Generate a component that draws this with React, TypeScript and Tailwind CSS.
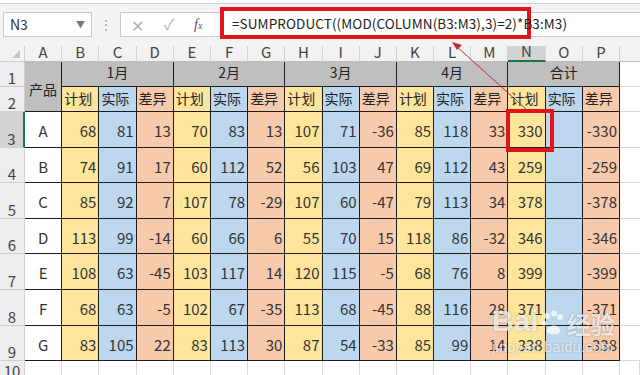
import React from "react";

const cols = "ABCDEFGHIJKLMNOP".split("");
const months = ["1月", "2月", "3月", "4月", "合计"];
const labels = ["计划", "实际", "差异"];
const fills = ["bg-[#fde59c]", "bg-[#bdd7ee]", "bg-[#f7caab]"];

const rows: [string, (number | null)[]][] = [
  ["A", [68, 81, 13, 70, 83, 13, 107, 71, -36, 85, 118, 33, 330, null, -330]],
  ["B", [74, 91, 17, 60, 112, 52, 56, 103, 47, 69, 112, 43, 259, null, -259]],
  ["C", [85, 92, 7, 107, 78, -29, 107, 60, -47, 79, 113, 34, 378, null, -378]],
  ["D", [113, 99, -14, 60, 66, 6, 55, 70, 15, 118, 86, -32, 346, null, -346]],
  ["E", [108, 63, -45, 103, 117, 14, 120, 115, -5, 68, 76, 8, 399, null, -399]],
  ["F", [68, 63, -5, 102, 67, -35, 113, 68, -45, 88, 116, 28, 371, null, -371]],
  ["G", [83, 105, 22, 83, 113, 30, 87, 54, -33, 85, 99, 14, 338, null, -338]],
];

const line = "border-r border-b border-[#1c1c1c]";

function RowHead({ n, active }: { n: number; active?: boolean }) {
  return (
    <div
      className={`flex items-end justify-center pb-[1px] text-[15px] leading-none text-[#444] border-b border-r border-[#cfcfcf] ${
        active ? "bg-[#d3d3d3] border-r-[#217346] border-r-2" : "bg-[#ededed]"
      }`}
    >
      {n}
    </div>
  );
}

export default function App() {
  return (
    <div className="relative w-[640px] h-[375px] overflow-hidden bg-white font-['Noto_Sans_CJK_SC',sans-serif] text-[#222]">
      {/* formula bar */}
      <div className="h-[43px] bg-[#f3f3f3] border-t border-[#d2d2d2] mt-[3px] flex items-start pt-[8px] relative">
        <div className="ml-[3px] w-[89px] h-[25px] bg-white border border-[#c9c9c9] flex items-center justify-between px-[6px]">
          <span className="text-[14px] text-[#333]">N3</span>
          <span className="text-[9px] text-[#777]">▼</span>
        </div>
        <div className="w-[28px] h-[25px] flex items-center justify-center text-[#a8a8a8] text-[14px]">⋮</div>
        <div className="flex-1 h-[25px] bg-white border border-[#c9c9c9] border-r-0 flex items-center pl-[10px]">
          <span className="text-[#b0b0b0] text-[16px] w-[33px]">✕</span>
          <span className="text-[#b0b0b0] text-[15px] w-[30px]">✓</span>
          <span className="text-[#555] text-[14px] italic font-['Liberation_Serif',serif]">f<span className="text-[10px]">x</span></span>
        </div>
      </div>

      {/* grid */}
      <div className="grid grid-cols-[25px_repeat(16,37.2px)_1fr] grid-rows-[19px_25px_25px_repeat(7,35.6px)_1fr] h-[329px] -mt-[3px]">
        {/* column header */}
        <div className="bg-[#f2f2f2] border-b border-r border-[#cfcfcf] flex items-end justify-end pr-[4px] pb-[3px]">
          <div className="w-0 h-0 border-l-[8px] border-l-transparent border-b-[8px] border-b-[#c4c4c4]" />
        </div>
        {cols.map((c) => (
          <div
            key={c}
            className={`flex items-center justify-center text-[15px] text-[#444] border-r border-[#d4d4d4] ${
              c === "N" ? "bg-[#d4d4d4] border-b-2 border-b-[#217346]" : "bg-[#f2f2f2] border-b border-b-[#bdbdbd]"
            }`}
          >
            {c}
          </div>
        ))}
        <div className="bg-[#f2f2f2] border-b border-[#bdbdbd]" />

        {/* row 1 */}
        <RowHead n={1} />
        <div className={`row-span-2 bg-[#bfbfbf] flex items-center justify-center pt-[6px] text-[14px] ${line}`}>产品</div>
        {months.map((m) => (
          <div key={m} className={`col-span-3 bg-[#bfbfbf] flex items-end justify-center pb-[3px] text-[14px] ${line}`}>
            {m}
          </div>
        ))}
        <div className="border-b border-[#dadada]" />

        {/* row 2 */}
        <RowHead n={2} />
        {Array.from({ length: 15 }).map((_, i) => (
          <div key={i} className={`${fills[i % 3]} flex items-end pl-[2px] pb-[2px] text-[14px] ${line}`}>
            {labels[i % 3]}
          </div>
        ))}
        <div className="border-b border-[#dadada]" />

        {/* data */}
        {rows.map(([name, vals], r) => (
          <React.Fragment key={name}>
            <RowHead n={r + 3} active={r === 0} />
            <div className={`bg-white flex items-center justify-center pt-[4px] text-[15px] text-[#333] ${line}`}>{name}</div>
            {vals.map((v, i) => (
              <div
                key={i}
                className={`${fills[i % 3]} flex items-center justify-end pr-[2px] pt-[4px] text-[15px] text-[#333] ${line}`}
              >
                {v === null ? "" : v}
              </div>
            ))}
            <div className="border-b border-[#dadada]" />
          </React.Fragment>
        ))}

        {/* row 10 */}
        <div className="bg-[#ededed] border-r border-[#cfcfcf] flex items-end justify-center text-[15px] leading-none text-[#444] pt-[2px]">10</div>
        {Array.from({ length: 17 }).map((_, i) => (
          <div key={i} className="border-r border-[#dadada]" />
        ))}
      </div>

      {/* annotations */}
      <div className="absolute left-[220px] top-[7px] w-[311px] h-[32px] border-[4px] border-[#e0141b] bg-white flex items-center pl-[8px] text-[13.5px] text-[#222] tracking-[0.1px]">
        =SUMPRODUCT((MOD(COLUMN(B3:M3),3)=2)*B3:M3)
      </div>
      <div className="absolute left-[506px] top-[109px] w-[48px] h-[43px] border-[4px] border-[#e0141b]" />
      <svg className="absolute left-0 top-0" width="640" height="375">
        <line x1="527" y1="110" x2="455" y2="45" stroke="#c8282a" strokeWidth="1" />
        <polygon points="452,42 462,45 457,50" fill="#c8282a" />
      </svg>

      {/* watermark */}
      <div className="absolute left-[492px] top-[306px] text-white/75 [text-shadow:0_0_2px_rgba(0,0,0,0.3)]">
        <div className="flex items-end gap-[2px]">
          <span className="text-[30px] font-bold leading-none font-['Liberation_Sans',sans-serif]">Bai</span>
          <svg width="24" height="26" viewBox="0 0 24 26" className="opacity-75">
            <circle cx="6" cy="6" r="3" fill="white" />
            <circle cx="13" cy="3.5" r="3" fill="white" />
            <circle cx="19" cy="7" r="3" fill="white" />
            <circle cx="3" cy="13" r="2.6" fill="white" />
            <path d="M6 22 C6 14 18 13 19 21 C19 25 7 25 6 22Z" fill="white" />
          </svg>
          <span className="text-[24px] font-bold leading-none">经验</span>
        </div>
        <div className="text-[14px] leading-none mt-[4px] font-['Liberation_Sans',sans-serif] tracking-[0.5px]">jingyan.baidu.com</div>
      </div>
    </div>
  );
}
